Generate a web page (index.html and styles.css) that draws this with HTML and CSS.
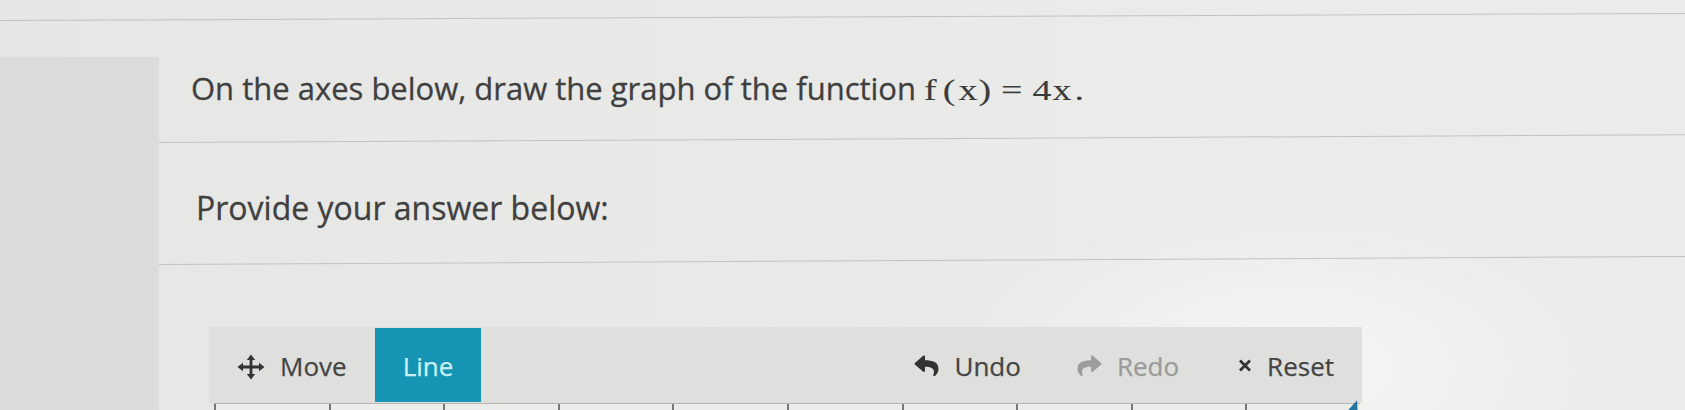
FILE: index.html
```html
<!DOCTYPE html>
<html lang="en">
<head>
<meta charset="utf-8">
<title>Graph question</title>
<link rel="stylesheet" href="styles.css">
</head>
<body>
<div class="page">
  <div class="topbar"></div>
  <div class="rule rule-top"></div>
  <div class="main">
    <aside class="side"></aside>
    <section class="content">
      <div class="question">On the axes below, draw the graph of the function <span class="math"><span class="mf">f</span><span class="mlp">(</span><span class="mx">x</span><span class="mrp">)</span><span class="meq">=</span><span class="m4">4</span><span class="mx2">x</span><span class="mdot">.</span></span></div>
      <div class="rule rule-a"></div>
      <div class="prompt">Provide your answer below:</div>
      <div class="rule rule-b"></div>
      <div class="answer">
        <div class="toolbar">
          <div class="group">
            <div class="btn">
              <svg class="ico-move" viewBox="0 0 28 26" aria-hidden="true">
                <path d="M14 4.5V21.5M4.5 13H23.5" stroke="#333" stroke-width="2.8" fill="none"/>
                <path d="M14 0.5L9.8 6H18.2Z M14 25.5L9.8 20H18.2Z M0.5 13L6 8.8V17.2Z M27.5 13L22 8.8V17.2Z" fill="#333"/>
              </svg>
              <span class="lbl">Move</span>
            </div>
            <div class="btn btn-active"><span class="lbl">Line</span></div>
          </div>
          <div class="group">
            <div class="btn">
              <svg class="ico-undo" viewBox="0 0 512 470" aria-hidden="true">
                <path fill="#333" d="M8.3 189.8L184.3 37.9C199.7 24.5 224 35.3 224 56v80.1c160.6 1.8 288 34 288 186.3 0 61.4-39.6 122.3-83.3 154.1-13.7 9.9-33.1-2.5-28.1-18.6 45.3-145-21.5-183.5-176.6-185.7V360c0 20.7-24.3 31.5-39.7 18.2l-176-152c-11.1-9.6-11.1-26.8 0-36.4z"/>
              </svg>
              <span class="lbl">Undo</span>
            </div>
            <div class="btn btn-disabled">
              <svg class="ico-undo" viewBox="0 0 512 470" aria-hidden="true">
                <path fill="#9c9c9c" transform="matrix(-1 0 0 1 512 0)" d="M8.3 189.8L184.3 37.9C199.7 24.5 224 35.3 224 56v80.1c160.6 1.8 288 34 288 186.3 0 61.4-39.6 122.3-83.3 154.1-13.7 9.9-33.1-2.5-28.1-18.6 45.3-145-21.5-183.5-176.6-185.7V360c0 20.7-24.3 31.5-39.7 18.2l-176-152c-11.1-9.6-11.1-26.8 0-36.4z"/>
              </svg>
              <span class="lbl">Redo</span>
            </div>
            <div class="btn btn-reset">
              <svg class="ico-x" viewBox="0 0 14 13" aria-hidden="true">
                <path d="M2 1.5L12 11.5M12 1.5L2 11.5" stroke="#333" stroke-width="2.8" fill="none"/>
              </svg>
              <span class="lbl">Reset</span>
            </div>
          </div>
        </div>
        <div class="board">
          <div class="cell"></div><div class="cell"></div><div class="cell"></div><div class="cell"></div><div class="cell"></div>
          <div class="cell"></div><div class="cell"></div><div class="cell"></div><div class="cell"></div><div class="cell"></div>
          <span class="axis-tip"></span>
        </div>
      </div>
    </section>
  </div>
</div>
</body>
</html>
```

FILE: styles.css
```css
html, body {
  margin: 0;
  padding: 0;
  width: 1685px;
  height: 410px;
  overflow: hidden;
}

body {
  background-color: #e8e8e6;
  background-image:
    radial-gradient(ellipse 330px 170px at 1290px 370px, rgba(255, 255, 255, 0.55), rgba(255, 255, 255, 0)),
    linear-gradient(90deg, #e6e6e4 0%, #eaeae8 60%, #ebebea 100%);
  font-family: "Open Sans", "DejaVu Sans", sans-serif;
  color: #3f3f3f;
}

.page {
  display: flex;
  flex-direction: column;
}

.topbar {
  height: 20px;
}

.rule {
  height: 1px;
  background: #c2c2c0;
  transform-origin: 0 50%;
}

.rule-top {
  width: 1700px;
  transform: rotate(-0.24deg);
}

.rule-a {
  transform: rotate(-0.29deg);
}

.rule-b {
  transform: rotate(-0.3deg);
}

.main {
  display: flex;
  align-items: stretch;
  min-height: 400px;
}

.side {
  width: 159px;
  margin-top: 36px;
  background: #dcdcda;
  flex: 0 0 159px;
}

.content {
  flex: 1;
  display: flex;
  flex-direction: column;
}

.question {
  padding: 44px 0 32px 32px;
  font-size: 31px;
  line-height: 44px;
  white-space: nowrap;
  color: #3f3f3f;
  -webkit-text-stroke: 0.3px #3f3f3f;
}

.math {
  display: inline-block;
  font-family: "Liberation Serif", "DejaVu Serif", serif;
  font-size: 38px;
  line-height: 44px;
  color: #3c3c3c;
  -webkit-text-stroke: 0.1px #3c3c3c;
  transform: scaleY(0.78);
  transform-origin: 50% 35px;
}

.mlp {
  margin-left: 6px;
}

.mx {
  margin: 0 1px 0 3px;
}

.meq {
  margin: 0 10px 0 10px;
}

.mx2 {
  margin-left: 1px;
}

.mdot {
  margin-left: 3px;
}

.prompt {
  padding: 43px 0 34px 37px;
  font-size: 32px;
  line-height: 44px;
  color: #404040;
  -webkit-text-stroke: 0.3px #404040;
}

.answer {
  padding: 62px 0 0 50px;
  display: flex;
  flex-direction: column;
}

.toolbar {
  width: 1153px;
  height: 76px;
  display: flex;
  justify-content: space-between;
  background: #dfdfdd;
}

.group {
  display: flex;
}

.btn {
  display: flex;
  align-items: center;
  gap: 15px;
  padding: 0 28px;
  height: 76px;
  font-size: 26px;
  color: #444;
  -webkit-text-stroke: 0.25px currentColor;
}

.lbl {
  line-height: 76px;
  position: relative;
  top: 1px;
}

.btn-active {
  background: #1694b4;
  color: #caf2f6;
  height: 74px;
  margin-top: 1px;
}

.btn-disabled {
  color: #9a9a9a;
}

.btn-reset {
  padding-left: 31px;
}

.ico-move {
  width: 28px;
  height: 26px;
  flex: none;
  position: relative;
  top: 2px;
}

.ico-undo {
  width: 25px;
  height: 22px;
  flex: none;
}

.ico-x {
  width: 14px;
  height: 13px;
  flex: none;
}

.board {
  position: relative;
  margin-left: 5px;
  width: 1146px;
  height: 120px;
  display: flex;
  border-top: 1px solid #b5b5b3;
  background: #ececea;
}

.cell {
  flex: 1;
  border-left: 2px solid #777;
}

.axis-tip {
  position: absolute;
  right: 0;
  top: -4px;
  width: 0;
  height: 0;
  border-left: 5px solid transparent;
  border-right: 5px solid transparent;
  border-bottom: 12px solid #23759f;
  transform: rotate(20deg);
}
```
